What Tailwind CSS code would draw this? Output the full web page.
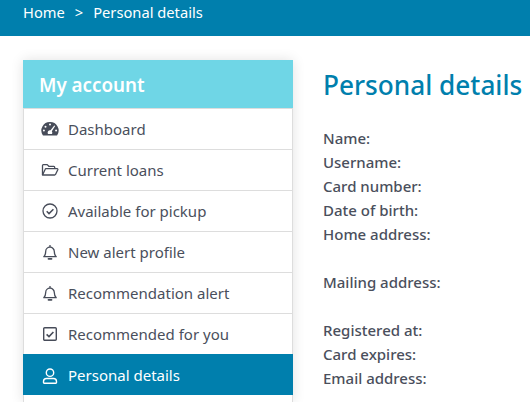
<!DOCTYPE html>
<html lang="en">
<head>
    <meta charset="UTF-8">
    <title>Personal details</title>
    <script src="https://cdn.jsdelivr.net/npm/@tailwindcss/browser@4"></script>
</head>
<body class="bg-white font-['Noto_Sans',sans-serif] text-[#4a4f5c] h-[402px] w-[530px] overflow-hidden">
    <!-- Breadcrumb -->
    <header class="h-9 bg-[#007fad] text-white text-[14.7px] leading-[25px] pl-[23px] flex gap-[10px] items-start">
        <span>Home</span>
        <span>&gt;</span>
        <span>Personal details</span>
    </header>

    <div class="flex pl-[23px] pt-6 gap-[30px]">
        <!-- Sidebar -->
        <nav class="w-[270px] shrink-0 shadow-[0_0_12px_rgba(0,0,0,0.12)] h-[342px]">
            <div class="h-12 bg-[#6fd6e6] text-white text-[18.8px] font-semibold pl-4 pt-[3px] flex items-center">My account</div>
            <ul class="border-x border-t border-[#ddd] text-[15px]">
                <li class="h-10 box-content border-b border-[#ddd] flex items-center gap-[9px] pl-[17px]">
                    <svg class="w-[18px] h-[18px]" viewBox="0 0 18 18" fill="#474c59"><path fill-rule="evenodd" d="M9 2a8.500 8.500 0 0 0-7.200 13.200c.2.300.5.400.8.400h12.800c.3 0 .6-.1.800-.4A8.500 8.500 0 0 0 9 2zM9 3.400a1 1 0 1 1 0 2 1 1 0 0 1 0-2zM4.500 5.700a1 1 0 1 1 0 2 1 1 0 0 1 0-2zM2.900 9.600a1 1 0 1 1 0 2 1 1 0 0 1 0-2zM15.100 9.600a1 1 0 1 1 0 2 1 1 0 0 1 0-2zM13.300 5.500l.9.500-3.400 5.300c.3.400.5.900.5 1.400 0 .5-.2.900-.4 1.300H7.100a2.400 2.400 0 0 1 2.400-3.700z"/></svg>
                    <span>Dashboard</span>
                </li>
                <li class="h-10 box-content border-b border-[#ddd] flex items-center gap-[9px] pl-[17px]">
                    <svg class="w-[18px] h-[18px]" viewBox="0 0 18 18" fill="none" stroke="#474c59" stroke-width="1.300" stroke-linejoin="round"><path d="M1.500 14V4.500c0-.5.400-.9.900-.9h3.800l1.600 1.700h5c.5 0 .9.400.9.900v1.600"/><path d="M1.500 14l2.700-5.800c.1-.3.400-.5.800-.5h11.200c.5 0 .8.500.6 1l-2.300 4.800c-.2.300-.5.500-.8.500z"/></svg>
                    <span>Current loans</span>
                </li>
                <li class="h-10 box-content border-b border-[#ddd] flex items-center gap-[9px] pl-[17px]">
                    <svg class="w-[18px] h-[18px]" viewBox="0 0 18 18" fill="none" stroke="#474c59" stroke-width="1.300"><circle cx="9" cy="9" r="7"/><path d="M5.700 9.300l2.300 2.300 4.400-4.400" stroke-width="1.500"/></svg>
                    <span>Available for pickup</span>
                </li>
                <li class="h-10 box-content border-b border-[#ddd] flex items-center gap-[9px] pl-[17px]">
                    <svg class="w-[18px] h-[18px]" viewBox="0 0 18 18" fill="none" stroke="#474c59" stroke-width="1.300" stroke-linejoin="round"><path d="M2.800 13.700c1.200-1.200 1.900-2.200 1.900-5.200a4.300 4.300 0 0 1 8.600 0c0 3 .7 4 1.900 5.200z"/><path d="M9 2v2"/><path d="M7.500 15.800h3" stroke-width="1.800" stroke-linecap="round"/></svg>
                    <span>New alert profile</span>
                </li>
                <li class="h-10 box-content border-b border-[#ddd] flex items-center gap-[9px] pl-[17px]">
                    <svg class="w-[18px] h-[18px]" viewBox="0 0 18 18" fill="none" stroke="#474c59" stroke-width="1.300" stroke-linejoin="round"><path d="M2.800 13.700c1.200-1.200 1.900-2.200 1.900-5.200a4.300 4.300 0 0 1 8.600 0c0 3 .7 4 1.900 5.200z"/><path d="M9 2v2"/><path d="M7.500 15.800h3" stroke-width="1.800" stroke-linecap="round"/></svg>
                    <span>Recommendation alert</span>
                </li>
                <li class="h-10 flex items-center gap-[9px] pl-[17px]">
                    <svg class="w-[18px] h-[18px]" viewBox="0 0 18 18" fill="none" stroke="#474c59" stroke-width="1.400"><rect x="2.700" y="2.700" width="12.600" height="12.600" rx="1"/><path d="M5.600 9.300l2.400 2.300 4.400-4.600" stroke-width="1.600"/></svg>
                    <span>Recommended for you</span>
                </li>
                <li class="h-[41px] pt-[2px] bg-[#007fad] text-white flex items-center gap-[9px] -mx-px pl-[18px]">
                    <svg class="w-[18px] h-[18px]" viewBox="0 0 18 18" fill="none" stroke="#fff" stroke-width="1.400"><circle cx="9" cy="5.700" r="3.700"/><path d="M3.200 16.200h11.600c.4 0 .7-.3.700-.7v-1c0-1.700-1.400-3-3-3h-7c-1.600 0-3 1.300-3 3v1c0 .4.300.7.700.7z"/></svg>
                    <span>Personal details</span>
                </li>
                <li class="h-[7px]"></li>
            </ul>
        </nav>

        <!-- Details -->
        <main class="whitespace-nowrap">
            <h1 class="text-[26.2px] leading-[36px] font-medium text-[#007fad] mt-[7px]">Personal details</h1>
            <dl class="mt-[23px] text-[15px] leading-6 font-medium">
                <dt>Name:</dt>
                <dt>Username:</dt>
                <dt>Card number:</dt>
                <dt>Date of birth:</dt>
                <dt class="mb-6">Home address:</dt>
                <dt class="mb-6">Mailing address:</dt>
                <dt>Registered at:</dt>
                <dt>Card expires:</dt>
                <dt>Email address:</dt>
            </dl>
        </main>
    </div>
</body>
</html>
